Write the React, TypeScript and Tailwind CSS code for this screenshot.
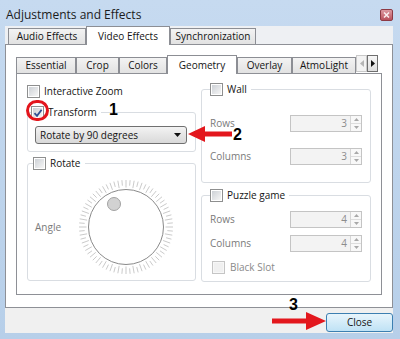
import type { ReactNode } from 'react'

const ticks = Array.from({ length: 72 }, (_, i) => i)

function Check({ checked = false, disabled = false }: { checked?: boolean; disabled?: boolean }) {
  return (
    <span
      className={`relative flex h-[13px] w-[13px] shrink-0 border p-[1px] ${
        disabled ? 'border-[#c5c5c5] bg-[#f7f7f7]' : 'border-[#8e8f8f] bg-white'
      }`}
    >
      <span
        className={`h-full w-full ${
          disabled ? 'bg-[#f0f0f0]' : 'bg-gradient-to-br from-[#cdd1d6] to-[#f6f6f6]'
        }`}
      />
      {checked && (
        <svg className="absolute left-[1px] top-[1px]" width="10" height="10" viewBox="0 0 10 10">
          <path d="M1.5 5.2 L4 7.8 L8.6 1.8" fill="none" stroke="#2f4f93" strokeWidth="1.8" />
        </svg>
      )}
    </span>
  )
}

function Spin({ value }: { value: number }) {
  return (
    <div className="flex h-[17px] w-[72px] border border-[#c4c4c4] bg-[#f3f3f3]">
      <span className="flex-1 pr-[3px] text-right leading-[15px] text-[#8c8c8c]">{value}</span>
      <span className="flex w-[11px] flex-col border-l border-[#d6d6d6] bg-[#f8f8f8]">
        <span className="flex flex-1 items-center justify-center border-b border-[#dddddd]">
          <svg width="5" height="3" viewBox="0 0 5 3">
            <path d="M0 3 L2.5 0 L5 3Z" fill="#a8a8a8" />
          </svg>
        </span>
        <span className="flex flex-1 items-center justify-center">
          <svg width="5" height="3" viewBox="0 0 5 3">
            <path d="M0 0 L2.5 3 L5 0Z" fill="#a8a8a8" />
          </svg>
        </span>
      </span>
    </div>
  )
}

function Group({ legend, offset, children }: { legend: ReactNode; offset: string; children: ReactNode }) {
  return (
    <fieldset className="rounded-[3px] border border-[#d9dde2]">
      <legend className={`${offset} pr-[4px]`}>
        <span className="flex h-[13px] items-center gap-[4px]">{legend}</span>
      </legend>
      {children}
    </fieldset>
  )
}

function Tab({ label, w, active = false }: { label: string; w: string; active?: boolean }) {
  return active ? (
    <div
      className={`${w} relative z-10 -mb-px flex h-[19px] items-center justify-center border border-b-0 border-[#8c8e94] bg-white`}
    >
      {label}
    </div>
  ) : (
    <div
      className={`${w} flex h-[16px] items-center justify-center border border-b-0 border-[#8c8e94] bg-gradient-to-b from-[#f3f3f3] to-[#e2e2e2]`}
    >
      {label}
    </div>
  )
}

function Row({ label, value }: { label: string; value: number }) {
  return (
    <div className="flex items-center justify-between pl-[8px] pr-[8px]">
      <span className="text-[#7a7a7a]">{label}</span>
      <Spin value={value} />
    </div>
  )
}

export default function App() {
  return (
    <div className="relative h-[339px] w-[400px] overflow-hidden bg-gradient-to-b from-[#c6daf0] to-[#b7cfe9] font-['Open_Sans','Noto_Sans',sans-serif] text-[10px] text-[#141414]">
      <div className="flex h-[26px] items-center justify-between pl-[6px] pr-[7px] pt-[4px]">
        <span className="text-[12px] text-[#1b1b1b]">Adjustments and Effects</span>
        <span className="flex h-[12px] w-[13px] items-center justify-center rounded-[2px] border border-[#8d3a44] bg-gradient-to-b from-[#dc9aa2] to-[#b9505c]">
          <svg width="7" height="6" viewBox="0 0 7 6">
            <path d="M1 0.5 L6 5.5 M6 0.5 L1 5.5" stroke="#fbeff0" strokeWidth="1.5" />
          </svg>
        </span>
      </div>

      <div className="ml-[5px] flex h-[307px] w-[388px] flex-col bg-[#eef0f3]">
        <div className="flex h-[18px] items-end pl-[3px]">
          <Tab label="Audio Effects" w="w-[78px]" />
          <Tab label="Video Effects" w="w-[84px]" active />
          <Tab label="Synchronization" w="w-[86px]" />
        </div>

        <div className="h-[264px] border border-[#8e9096] bg-white pl-[10px] pt-[10px]">
          <div className="flex h-[18px] items-end">
            <Tab label="Essential" w="w-[60px]" />
            <Tab label="Crop" w="w-[43px]" />
            <Tab label="Colors" w="w-[48px]" />
            <Tab label="Geometry" w="w-[70px]" active />
            <Tab label="Overlay" w="w-[55px]" />
            <Tab label="AtmoLight" w="w-[64px]" />
            <div className="mb-[1px] flex h-[17px] w-[11px] items-center justify-center border border-[#c9c9c9] bg-[#f3f3f3]">
              <svg width="4" height="7" viewBox="0 0 4 7">
                <path d="M4 0 L0 3.5 L4 7Z" fill="#b5b5b5" />
              </svg>
            </div>
            <div className="mb-[1px] flex h-[17px] w-[11px] items-center justify-center border border-[#6f6f6f] bg-gradient-to-b from-[#f7f7f7] to-[#dedede]">
              <svg width="4" height="7" viewBox="0 0 4 7">
                <path d="M0 0 L4 3.5 L0 7Z" fill="#111" />
              </svg>
            </div>
          </div>

          <div className="flex h-[222px] w-[366px] border border-[#8e9096] bg-white pl-[10px]">
            {/* left column */}
            <div className="flex w-[169px] flex-col pt-[11px]">
              <div className="flex h-[13px] items-center gap-[4px]">
                <Check />
                <span>Interactive Zoom</span>
              </div>

              <div className="mt-[8px]">
                <Group offset="ml-[3px]" legend={<><Check checked /><span>Transform</span></>}>
                  <div className="px-[7px] pb-[7px] pt-[7px]">
                    <div className="flex h-[18px] w-[152px] items-center justify-between rounded-[3px] border border-[#707070] bg-gradient-to-b from-[#f3f3f3] to-[#d9d9d9] pl-[4px] pr-[5px]">
                      <span>Rotate by 90 degrees</span>
                      <svg width="7" height="4" viewBox="0 0 7 4">
                        <path d="M0 0 L7 0 L3.5 4Z" fill="#111" />
                      </svg>
                    </div>
                  </div>
                </Group>
              </div>

              <div className="mt-[5px]">
                <Group offset="ml-[5px]" legend={<><Check /><span>Rotate</span></>}>
                  <div className="flex items-center pb-[3px] pl-[7px] pt-[7px]">
                    <span className="w-[41px] text-[#7a7a7a]">Angle</span>
                    <svg width="100" height="100" viewBox="0 0 100 100">
                      {ticks.map((i) => {
                        const a = (i * 5 * Math.PI) / 180
                        const r1 = i % 2 === 0 ? 39.5 : 41.5
                        const r2 = 47
                        return (
                          <line
                            key={i}
                            x1={50 + r1 * Math.sin(a)}
                            y1={50 - r1 * Math.cos(a)}
                            x2={50 + r2 * Math.sin(a)}
                            y2={50 - r2 * Math.cos(a)}
                            stroke="#b3b3b3"
                            strokeWidth="0.7"
                          />
                        )
                      })}
                      <circle cx="50" cy="50" r="37.5" fill="white" stroke="#8a8a8a" strokeWidth="1" />
                      <circle cx="38" cy="27" r="6.5" fill="#d2d2d2" stroke="#a2a2a2" strokeWidth="1" />
                    </svg>
                  </div>
                </Group>
              </div>
            </div>

            {/* right column */}
            <div className="ml-[5px] flex w-[170px] flex-col pt-[9px]">
              <Group offset="ml-[8px]" legend={<><Check /><span>Wall</span></>}>
                <div className="flex flex-col gap-[16px] pb-[17px] pt-[19px]">
                  <Row label="Rows" value={3} />
                  <Row label="Columns" value={3} />
                </div>
              </Group>

              <div className="mt-[6px]">
                <Group offset="ml-[8px]" legend={<><Check /><span>Puzzle game</span></>}>
                  <div className="flex flex-col gap-[7px] pb-[7px] pt-[9px]">
                    <Row label="Rows" value={4} />
                    <Row label="Columns" value={4} />
                    <div className="mt-[2px] flex h-[13px] items-center gap-[5px] pl-[10px]">
                      <Check disabled />
                      <span className="text-[#8a8a8a]">Black Slot</span>
                    </div>
                  </div>
                </Group>
              </div>
            </div>
          </div>
        </div>

        <div className="flex h-[25px] justify-end bg-[#f0f0f0] pt-[5px]">
          <div className="flex h-[19px] w-[67px] items-center justify-center rounded-[3px] border border-[#3c7fb1] bg-gradient-to-b from-[#e8f5fc] to-[#bfe2f5]">
            Close
          </div>
        </div>
      </div>

      {/* annotations */}
      <div className="absolute left-[26px] top-[100px] h-[21px] w-[23px] rounded-full border-[3px] border-[#e3151c]" />
      <span className="absolute left-[109px] top-[102px] font-['Liberation_Sans',sans-serif] text-[16px] font-bold leading-none text-black">1</span>
      <svg className="absolute left-[186px] top-[125px]" width="48" height="18" viewBox="0 0 48 18">
        <path d="M2 9 L19 1 L19 6.5 L46 6.5 L46 11.5 L19 11.5 L19 17Z" fill="#e3171d" />
      </svg>
      <span className="absolute left-[233px] top-[127px] font-['Liberation_Sans',sans-serif] text-[16px] font-bold leading-none text-black">2</span>
      <svg className="absolute left-[271px] top-[311px]" width="56" height="20" viewBox="0 0 56 20">
        <path d="M1 7.5 L35 7.5 L35 1 L55 10 L35 19 L35 12.5 L1 12.5Z" fill="#e3171d" />
      </svg>
      <span className="absolute left-[289px] top-[297px] font-['Liberation_Sans',sans-serif] text-[16px] font-bold leading-none text-black">3</span>
    </div>
  )
}
